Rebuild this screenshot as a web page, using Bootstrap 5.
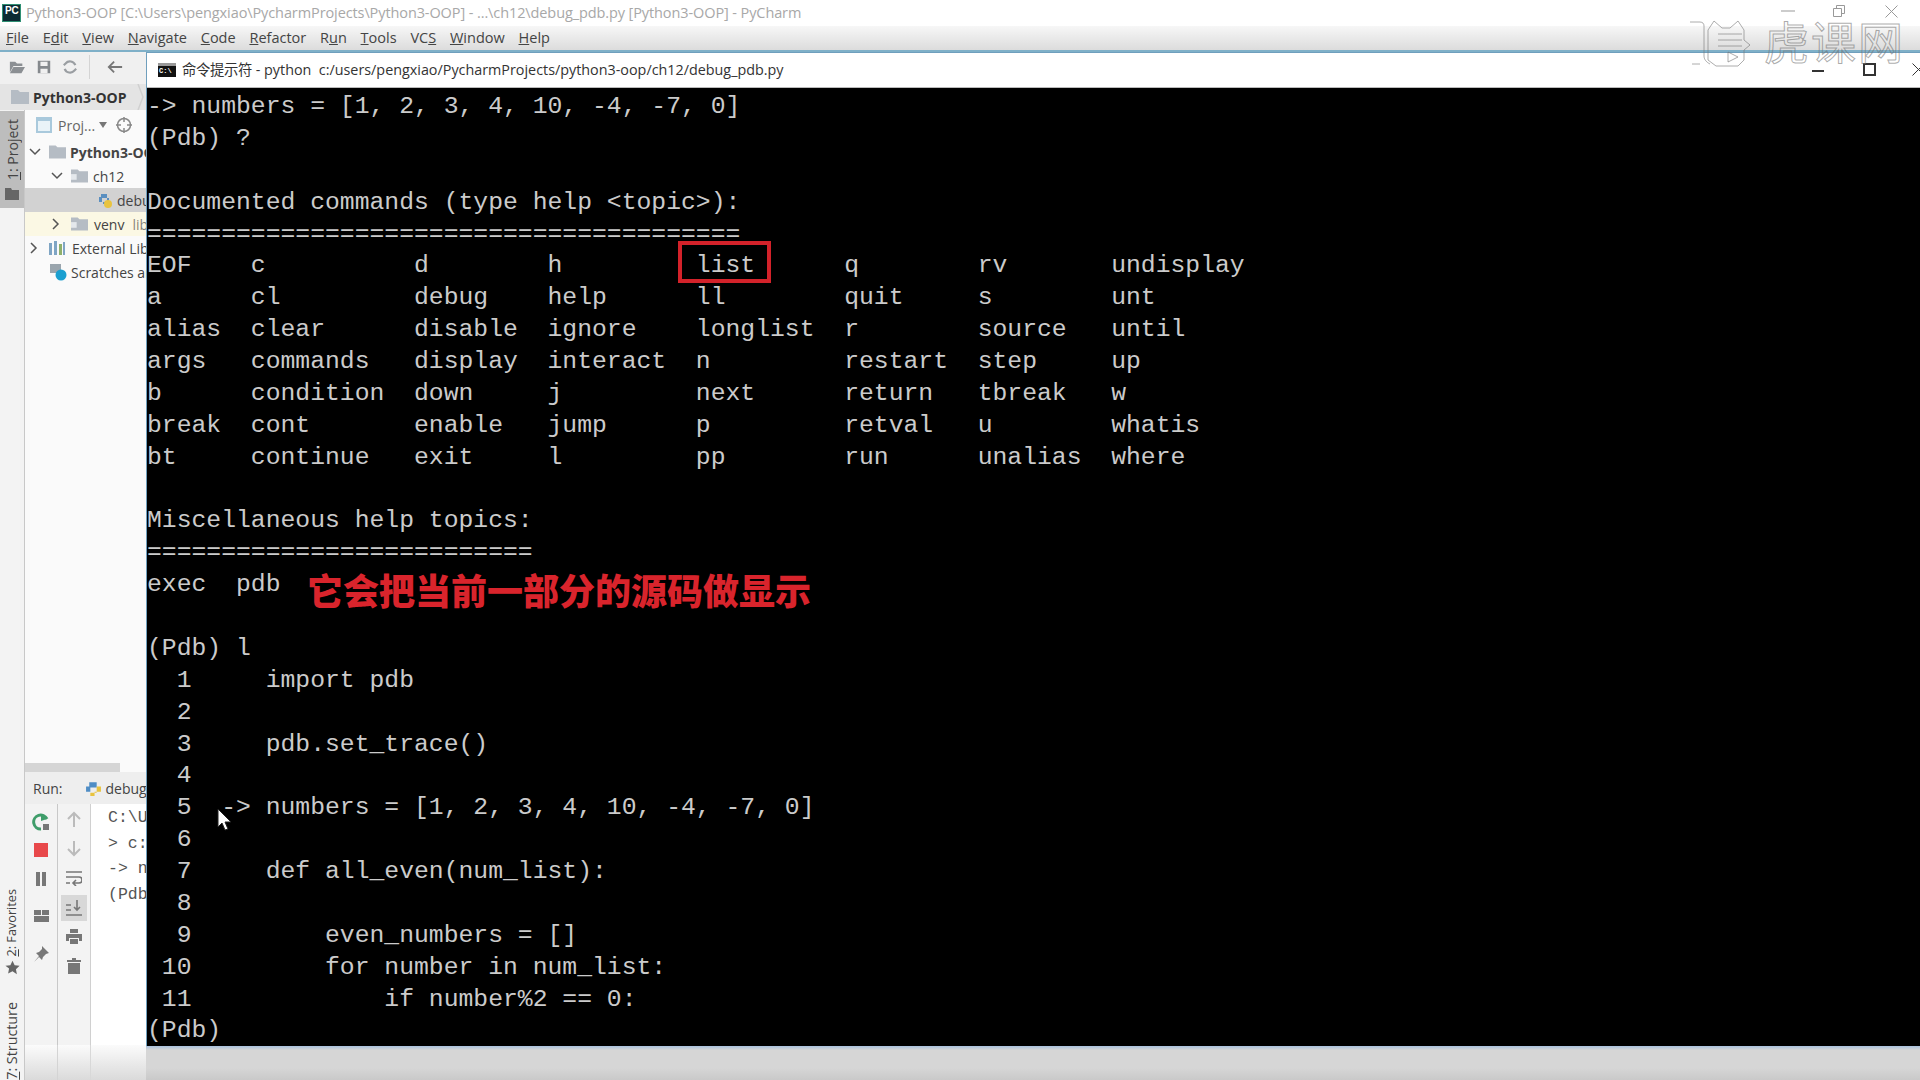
<!doctype html>
<html lang="zh-CN">
<head>
<meta charset="utf-8">
<title>PyCharm pdb</title>
<link href="https://cdn.jsdelivr.net/npm/bootstrap@5.3.0/dist/css/bootstrap.min.css" rel="stylesheet">
<style>
html,body{height:1080px;overflow:hidden;background:#f2f2f2;}
body{font-family:"Open Sans","Noto Sans",sans-serif;color:#333;}
.ide-shell{height:1080px;width:1920px;}
.title-row{height:26px;background:#fff;color:#a8a8a8;font-size:14.5px;padding-left:2px;white-space:nowrap;letter-spacing:-.1px;}
.pc-logo{width:19px;height:18px;background:#0d2a33;border:1px solid #2f8f73;color:#fff;font:700 10px/10px "Liberation Sans",sans-serif;margin-right:5px;padding:1px 0 0 2px;}
.menu-row{height:26px;background:linear-gradient(#f7f7f7,#dcdcdc);border-bottom:2px solid #7fb0c8;font-size:14.5px;padding:0 0 0 6px;color:#444;white-space:nowrap;}
.menu-row span{margin-right:13.8px;}
.tool-row{height:32px;background:#f0f0f0;padding:0 0 2px 8px;gap:10px;}
.tool-sep{width:1px;height:24px;background:#d4d4d4;margin-left:1px;margin-right:6px;}
.crumb-row{height:26px;background:#e4e4e4;font-size:14px;font-weight:700;color:#333;padding-left:11px;}
.main-area{height:970px;}
.left-strip{width:25px;background:#f3f3f3;border-right:1px solid #c8c8c8;}
.strip-active{height:97px;margin-top:1px;background:#bdbdbd;}
.vert-label{writing-mode:vertical-rl;transform:rotate(180deg);font-size:14px;color:#444;white-space:nowrap;}
.fav-label{font-size:12.7px;}
.struct-label{font-size:14.3px;margin-top:27px;}
.project-pane{height:662px;background:#fafafa;}
.pane-head{height:30px;font-size:14px;color:#666;padding-left:11px;}
.proj-name{margin-left:2px;}
.proj-target{margin-left:5px;}
.tree-row{height:24px;font-size:14px;white-space:nowrap;color:#444;}
.tree-sel{background:#d2d2d2;}
.tree-lib{background:#fbf8e4;}
.ind-root{margin-left:4px;}
.ind-child{margin-left:26px;}
.ind-file{margin-left:72px;}
.ind-ext{margin-left:4px;}
.ext-icon{margin-left:10px;margin-right:6px;}
.ind-scr{margin-left:25px;margin-right:3px;}
.venv-folder{margin-left:10px;margin-right:6px;}
.ch-name{margin-left:1px;}
.pane-scroll{height:9px;width:95px;background:#d5d5d5;margin-top:auto;}
.run-pane{height:273px;background:#fff;}
.run-head{height:32px;background:#eee;font-size:14px;color:#444;}
.run-py{margin-left:14px;margin-right:4px;}
.run-tools{width:33px;background:#f3f3f3;border-right:1px solid #c8c8c8;padding-top:9px;}
.run-tools2{width:33px;background:#f3f3f3;border-right:1px solid #d0d0d0;padding-top:7px;gap:13.5px;}
.rt-gap1{margin-top:12px;}
.rt-gap2{margin-top:15px;}
.rt-gap3{margin-top:24px;}
.rt-gap4{margin-top:24px;}
.scroll-on{background:#d8d8d8;box-shadow:0 0 0 5px #d8d8d8;}
.run-out{font:16.5px/25.5px "Liberation Mono",monospace;color:#555;padding:1px 0 0 17px;white-space:pre;}
.foot-row{height:35px;background:linear-gradient(#fbfbfb,#dadada);}
.foot-a{width:33px;border-right:1px solid #d4d4d4;}
.foot-b{width:33px;border-right:1px solid #d8d8d8;}
.term-win{position:absolute;left:146px;top:52px;width:1790px;height:994px;border:solid #6f9fbd;border-width:1px 0 1px 1px;background:#000;}
.term-title{height:35px;background:#fff;color:#333;font-size:14.35px;white-space:nowrap;padding-left:11px;border-bottom:1px solid #bbb;}
.term-body{margin:0;padding:3px 0 0 0;background:#000;color:#cbcbcb;font:24.72px/31.87px "Liberation Mono",monospace;overflow:hidden;height:958px;}
.cmd-glyph{width:18px;height:14px;background:#111;border-top:3px solid #999;color:#fff;font:700 7px/10px "Liberation Mono",monospace;margin-right:6px;padding-left:1px;}
.term-foot-glow{position:absolute;left:146px;right:0;top:1046px;height:35px;background:linear-gradient(#a9c1de 0,#d6d6d6 4px,#d6d6d6 22px,#c8c8c8 100%);}
.red-box{position:absolute;left:531px;top:188px;width:93px;height:42px;border:4px solid #d3222a;}
.red-note{position:absolute;left:160px;top:510px;font:900 36px/52px "Noto Sans CJK SC",sans-serif;color:#d9242c;white-space:nowrap;}
.mouse-arrow{position:absolute;left:217px;top:808px;}
.wm-text{position:absolute;left:1764px;top:10px;font:400 45px/62px "Noto Sans CJK SC",sans-serif;color:transparent;-webkit-text-stroke:1px rgba(115,115,115,.6);white-space:nowrap;letter-spacing:2px;}
.wm-logo{position:absolute;left:1688px;top:18px;}
.win-ctl{position:absolute;}
.ctl-min{left:1781px;top:10px;}
.ctl-max{left:1833px;top:5px;}
.ctl-close{left:1885px;top:5px;}
.tctl-min{left:1665px;top:17px;}
.tctl-max{left:1716px;top:10px;}
.tctl-close{left:1765px;top:10px;}
.crumb-chev{margin-left:6px;}
</style>
</head>
<body class="position-relative">
<div class="ide-shell d-flex flex-column">
  <div class="title-row d-flex align-items-center">
    <div class="pc-logo flex-shrink-0">PC</div>
    <span>Python3-OOP [C:\Users\pengxiao\PycharmProjects\Python3-OOP] - ...\ch12\debug_pdb.py [Python3-OOP] - PyCharm</span>
  </div>
  <div class="menu-row d-flex align-items-center">
    <span><u>F</u>ile</span><span>E<u>d</u>it</span><span><u>V</u>iew</span><span><u>N</u>avigate</span><span><u>C</u>ode</span><span><u>R</u>efactor</span><span>R<u>u</u>n</span><span><u>T</u>ools</span><span>VC<u>S</u></span><span><u>W</u>indow</span><span><u>H</u>elp</span>
  </div>
  <div class="tool-row d-flex align-items-center">
    <svg width="18" height="16" viewBox="0 0 20 18"><path d="M2 3h6l2 2h6v3H6L2 15zM6 9h13l-4 7H2z" fill="#8b8f93"/></svg>
    <svg width="16" height="16" viewBox="0 0 18 18"><path d="M2 2h14v14H2z" fill="#85898d"/><path d="M5 3h8v5H5zM5 11h8v5H5z" fill="#f0f0f0"/></svg>
    <svg width="16" height="16" viewBox="0 0 18 18" fill="none" stroke="#9a9ea2" stroke-width="2.4"><path d="M15 7a6.500 6.500 0 0 0-11-2L2 7M3 11a6.500 6.500 0 0 0 11 2l2-2"/></svg>
    <div class="tool-sep"></div>
    <svg width="18" height="16" viewBox="0 0 20 18" fill="none" stroke="#777" stroke-width="2"><path d="M18 9H3M9 3L3 9l6 6"/></svg>
  </div>
  <div class="crumb-row d-flex align-items-center gap-1">
    <svg width="18" height="14" viewBox="0 0 18 14"><path d="M0 0h7l2 2h9v12H0z" fill="#b5bcc4"/></svg>
    <span>Python3-OOP</span>
    <svg class="crumb-chev" width="7" height="26" viewBox="0 0 7 26" fill="none" stroke="#d0d0d0" stroke-width="1.500"><path d="M1 0l5 13-5 13"/></svg>
  </div>
  <div class="main-area d-flex flex-grow-1">
    <div class="left-strip d-flex flex-column align-items-center flex-shrink-0">
      <div class="strip-active w-100 d-flex flex-column align-items-center pt-2">
        <span class="vert-label"><u>1</u>: Project</span>
        <svg class="mt-2" width="14" height="12" viewBox="0 0 14 12"><path d="M0 0h6l1 2h7v10H0z" fill="#666"/></svg>
      </div>
      <div class="flex-grow-1"></div>
      <span class="vert-label fav-label mb-1"><u>2</u>: Favorites</span>
      <svg width="15" height="15" viewBox="0 0 24 24"><path d="M12 1l3.400 7.300 7.900 1-5.800 5.400 1.500 7.900L12 17.800 5 21.600l1.500-7.900L.7 9.300l7.900-1z" fill="#666"/></svg>
      <span class="vert-label struct-label"><u>7</u>: Structure</span>
    </div>
    <div class="flex-grow-1 d-flex flex-column">
      <div class="project-pane d-flex flex-column">
        <div class="pane-head d-flex align-items-center gap-1">
          <svg width="16" height="16" viewBox="0 0 16 16"><path d="M0 0h16v16H0z" fill="#a9c9dc"/><path d="M2 4h12v10H2z" fill="#e9f3f8"/></svg>
          <span class="proj-name">Proj...</span>
          <svg width="8" height="6" viewBox="0 0 8 6"><path d="M0 0h8L4 6z" fill="#777"/></svg>
          <svg class="proj-target" width="16" height="16" viewBox="0 0 16 16" fill="none" stroke="#888" stroke-width="1.500"><circle cx="8" cy="8" r="6.500"/><path d="M8 0v5M8 11v5M0 8h5M11 8h5"/></svg>
        </div>
        <div class="tree-row d-flex align-items-center"><svg class="ind-root" width="12" height="10" viewBox="0 0 12 10" fill="none" stroke="#555" stroke-width="1.500"><path d="M1 2l5 5 5-5"/></svg><svg class="ms-2 me-1" width="17" height="14" viewBox="0 0 18 14"><path d="M0 0h7l2 2h9v12H0z" fill="#b5bcc4"/></svg><b>Python3-OOP</b></div>
        <div class="tree-row d-flex align-items-center"><svg class="ind-child" width="12" height="10" viewBox="0 0 12 10" fill="none" stroke="#555" stroke-width="1.500"><path d="M1 2l5 5 5-5"/></svg><svg class="ms-2 me-1" width="17" height="14" viewBox="0 0 18 14"><path d="M0 0h7l2 2h9v12H0z" fill="#b5bcc4"/><path d="M0 5h6v6H0z" fill="#e4e8ec"/></svg><span class="ch-name">ch12</span></div>
        <div class="tree-row tree-sel d-flex align-items-center"><svg class="ind-file" width="16" height="16" viewBox="0 0 16 16"><path d="M4 5V2h6v4H5v4H2V5zM12 6v6H6v-2h4V6z" fill="#5a8fc0"/><circle cx="11" cy="12" r="4" fill="#e8c33f"/></svg><span class="ms-1">debug_pdb.py</span></div>
        <div class="tree-row tree-lib d-flex align-items-center"><svg class="ind-child" width="10" height="12" viewBox="0 0 10 12" fill="none" stroke="#555" stroke-width="1.500"><path d="M2 1l5 5-5 5"/></svg><svg class="venv-folder" width="17" height="14" viewBox="0 0 18 14"><path d="M0 0h7l2 2h9v12H0z" fill="#b5bcc4"/><path d="M0 5h6v6H0z" fill="#e4e8ec"/></svg>venv<span class="ms-2 text-black-50">library root</span></div>
        <div class="tree-row d-flex align-items-center"><svg class="ind-ext" width="10" height="12" viewBox="0 0 10 12" fill="none" stroke="#555" stroke-width="1.500"><path d="M2 1l5 5-5 5"/></svg><svg class="ext-icon" width="17" height="14" viewBox="0 0 17 14"><path d="M0 2h3v12H0zM5 0h3v14H5z" fill="#7fa5c4"/><path d="M10 3h3v11h-3z" fill="#8fb06b"/><path d="M14 1h2v13h-2z" fill="#7fa5c4"/></svg>External Libraries</div>
        <div class="tree-row d-flex align-items-center"><svg class="ind-scr" width="18" height="18" viewBox="0 0 18 18"><path d="M0 1h11v9H0z" fill="#9aa5ad"/><circle cx="11" cy="12" r="5.500" fill="#1a9fd0"/></svg>Scratches and Consoles</div>
        <div class="pane-scroll"></div>
      </div>
      <div class="run-pane d-flex flex-column">
        <div class="run-head d-flex align-items-center">
          <span class="px-2">Run:</span>
          <svg class="run-py" width="17" height="17" viewBox="0 0 16 16"><path d="M4 6V2h7v5H5v4H1V6z" fill="#4f8dc5"/><path d="M12 6h3v5H9v4H5v-3h6V6z" fill="#e8c33f"/></svg>
          <span>debug_pdb</span>
        </div>
        <div class="d-flex flex-grow-1">
          <div class="run-tools d-flex flex-column align-items-center flex-shrink-0">
            <svg width="18" height="18" viewBox="0 0 18 18" fill="none"><path d="M15 6A7 7 0 1 0 9 16" stroke="#3f9d6a" stroke-width="3"/><path d="M9 1l6 5-6 2z" fill="#3f9d6a"/><path d="M11 11h6v6h-6z" fill="#777"/></svg>
            <svg class="rt-gap1" width="14" height="14" viewBox="0 0 14 14"><path d="M0 0h14v14H0z" fill="#e8484a"/></svg>
            <svg class="rt-gap2" width="12" height="14" viewBox="0 0 12 14"><path d="M1 0h4v14H1zM7 0h4v14H7z" fill="#777"/></svg>
            <svg class="rt-gap3" width="15" height="12" viewBox="0 0 15 12"><path d="M0 0h7v5H0zM8 0h7v5H8zM0 6h15v6H0z" fill="#777"/></svg>
            <svg class="rt-gap4" width="16" height="16" viewBox="0 0 16 16"><path d="M9 0l7 7-3 1-3 3-1 3-3-3-5 5 5-6-3-3 3-1 3-3z" fill="#777"/></svg>
          </div>
          <div class="run-tools2 d-flex flex-column align-items-center flex-shrink-0">
            <svg width="14" height="16" viewBox="0 0 14 16" fill="none" stroke="#bbb" stroke-width="2"><path d="M7 16V2M1 8l6-6 6 6"/></svg>
            <svg width="14" height="16" viewBox="0 0 14 16" fill="none" stroke="#bbb" stroke-width="2"><path d="M7 0v14M1 8l6 6 6-6"/></svg>
            <svg width="16" height="16" viewBox="0 0 16 16" fill="none" stroke="#777" stroke-width="1.600"><path d="M0 2h16M0 7h13a3 3 0 0 1 0 6H8M0 13h4M10 10l-3 3 3 3"/></svg>
            <svg class="scroll-on" width="16" height="16" viewBox="0 0 16 16" fill="none" stroke="#777" stroke-width="1.600"><path d="M0 15h16M0 5h5M0 10h5M11 0v10M8 7l3 3 3-3"/></svg>
            <svg width="16" height="15" viewBox="0 0 16 15"><path d="M4 0h8v4H4zM0 5h16v7h-3V9H3v3H0zM4 10h8v5H4z" fill="#777"/></svg>
            <svg width="14" height="16" viewBox="0 0 14 16"><path d="M5 0h4v2h5v2H0V2h5zM1 5h12v11H1z" fill="#777"/></svg>
          </div>
          <pre class="run-out mb-0">C:\Users
&gt; c:/users
-&gt; numbers
(Pdb) </pre>
        </div>
      </div>
      <div class="foot-row d-flex">
        <div class="foot-a"></div>
        <div class="foot-b"></div>
      </div>
    </div>
  </div>
</div>

<div class="term-win">
  <div class="term-title d-flex align-items-center">
    <div class="cmd-glyph flex-shrink-0">C:\</div>
    <span>命令提示符 - python&nbsp;&nbsp;c:/users/pengxiao/PycharmProjects/python3-oop/ch12/debug_pdb.py</span>
    <svg class="win-ctl tctl-min" width="12" height="2"><path d="M0 1h12" stroke="#333" stroke-width="2"/></svg>
    <svg class="win-ctl tctl-max" width="13" height="13"><path d="M1 1h11v11H1z" stroke="#333" stroke-width="2" fill="none"/></svg>
    <svg class="win-ctl tctl-close" width="13" height="13" stroke="#333" fill="none"><path d="M.5.5l12 12M12.500.5l-12 12"/></svg>
  </div>
<pre class="term-body">-&gt; numbers = [1, 2, 3, 4, 10, -4, -7, 0]
(Pdb) ?

Documented commands (type help &lt;topic&gt;):
========================================
EOF    c          d        h         list      q        rv       undisplay
a      cl         debug    help      ll        quit     s        unt
alias  clear      disable  ignore    longlist  r        source   until
args   commands   display  interact  n         restart  step     up
b      condition  down     j         next      return   tbreak   w
break  cont       enable   jump      p         retval   u        whatis
bt     continue   exit     l         pp        run      unalias  where

Miscellaneous help topics:
==========================
exec  pdb

(Pdb) l
  1     import pdb
  2
  3     pdb.set_trace()
  4
  5  -&gt; numbers = [1, 2, 3, 4, 10, -4, -7, 0]
  6
  7     def all_even(num_list):
  8
  9         even_numbers = []
 10         for number in num_list:
 11             if number%2 == 0:
(Pdb)</pre>
  <div class="red-box"></div>
  <div class="red-note">它会把当前一部分的源码做显示</div>
</div>
<div class="term-foot-glow"></div>
<svg class="mouse-arrow" width="15" height="23" viewBox="0 0 15 23"><path d="M1 1v18l4-4 3 7 3-1-3-7h6z" fill="#fff" stroke="#222"/></svg>

<svg class="win-ctl ctl-min" width="14" height="2" viewBox="0 0 14 2"><path d="M0 1h14" stroke="#999"/></svg>
<svg class="win-ctl ctl-max" width="12" height="12" viewBox="0 0 12 12" fill="none" stroke="#999"><path d="M.5 3.500h8v8h-8zM3.500 3V.5h8v8H9"/></svg>
<svg class="win-ctl ctl-close" width="13" height="13" viewBox="0 0 13 13" stroke="#999" fill="none"><path d="M.5.5l12 12M12.500.5l-12 12"/></svg>
<svg class="wm-logo" width="76" height="52" viewBox="0 0 76 52" fill="none" stroke="#777" stroke-opacity=".6"><path d="M2 4h10c3 0 4 2 4 4v30c0 3 2 6 6 8M4 46h8M20 12l6-9 8 7h8l8-7 6 9v10l6 5-6 5v10l-6 6H28l-8-6z"/><path d="M30 16h24M30 22h24M30 28h24M40 34l10 5-10 5z"/></svg>
<div class="wm-text">虎课网</div>
</body>
</html>
